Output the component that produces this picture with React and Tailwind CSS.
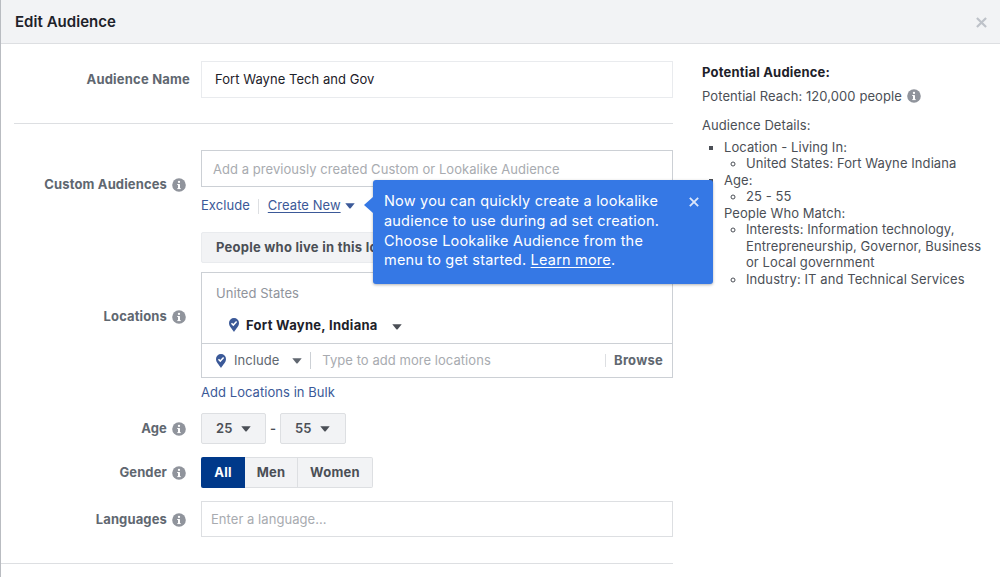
const Info = ({ className = "" }) => (
  <svg viewBox="0 0 14 14" className={`w-[14px] h-[14px] shrink-0 ${className}`}>
    <circle cx="7" cy="7" r="6.8" fill="#90949c" />
    <rect x="6" y="6" width="2" height="5" rx="0.4" fill="#fff" />
    <rect x="5.2" y="6" width="2" height="1" fill="#fff" />
    <rect x="5.2" y="10.2" width="3.6" height="0.9" fill="#fff" />
    <circle cx="7" cy="3.9" r="1.15" fill="#fff" />
  </svg>
);

const Caret = ({ color = "#4b4f56", className = "" }) => (
  <svg viewBox="0 0 10 6" className={`w-[10px] h-[6px] shrink-0 ${className}`}>
    <path d="M0.3 0.3 H9.7 L5.7 5.2 Q5 5.9 4.3 5.2 Z" fill={color} />
  </svg>
);

const Pin = ({ className = "" }) => (
  <svg viewBox="0 0 10 14" className={`w-[10px] h-[14px] shrink-0 ${className}`}>
    <path d="M5 0 A5 5 0 0 1 10 5 C10 8.6 7 10.6 5 14 C3 10.6 0 8.6 0 5 A5 5 0 0 1 5 0 Z" fill="#3b5998" />
    <path d="M2.5 5.3 L4.3 7.1 L7.6 3.5" stroke="#fff" strokeWidth="1.5" fill="none" />
  </svg>
);

const Row = ({ label, info, children, labelClass = "" }) => (
  <div className="flex">
    <div className={`w-[184px] shrink-0 flex items-center justify-end gap-[5px] font-bold text-[13px] tracking-[0.13px] text-[#606770] ${labelClass}`}>
      <span>{label}</span>
      {info && <Info />}
    </div>
    <div className="ml-[15px] w-[472px]">{children}</div>
  </div>
);

export default function App() {
  return (
    <div className="relative w-[1000px] h-[577px] overflow-hidden bg-white border-l border-[#b9bcc1] pl-px text-[13px] text-[#4b4f56] tracking-[0.05px] font-['Inter','Liberation_Sans',sans-serif]">
      <header className="-ml-px h-[44px] bg-[#f2f3f5] border-b border-[#dddfe2] flex items-center justify-between pl-[14px] pr-[13px] pt-[1px]">
        <h1 className="text-[15px] font-semibold text-[#1d2129] tracking-[0.04px]">Edit Audience</h1>
        <svg viewBox="0 0 12 12" className="w-[11px] h-[11px]">
          <path d="M1 1 L11 11 M11 1 L1 11" stroke="#bec2c9" strokeWidth="2.4" />
        </svg>
      </header>

      <div className="flex">
        <main className="w-[671px] shrink-0">
          <div className="pt-[17px] pb-[25px] ml-[12px] border-b border-[#dddfe2]">
            <div className="flex -ml-[12px]">
              <div className="w-[188px] shrink-0 flex items-center justify-end font-bold text-[13px] tracking-[0.2px] text-[#606770]">Audience Name</div>
              <div className="ml-[11px] w-[472px] h-[37px] border border-[#e9ebee] flex items-center pl-[13px] text-[#1d2129]">
                Fort Wayne Tech and Gov
              </div>
            </div>
          </div>

          <div className="pt-[26px] ml-[199px] w-[472px]">
            <div className="h-[37px] border border-[#ccd0d5] flex items-center pl-[11px] pt-[2px] text-[#a8abb0]">
              Add a previously created Custom or Lookalike Audience
            </div>
            <div className="relative">
              <div className="absolute right-[calc(100%+15px)] -top-[12px] flex items-center gap-[5px] font-bold tracking-[0.13px] text-[#606770] whitespace-nowrap">
                <span>Custom Audiences</span>
                <Info />
              </div>
            </div>
            <div className="h-[38px] flex items-center text-[#3b5998]">
              <span>Exclude</span>
              <span className="w-px h-[15px] bg-[#dddfe2] ml-[8px] mr-[9px]" />
              <span className="underline underline-offset-2">Create New</span>
              <Caret color="#3b5998" className="ml-[4px]" />
            </div>
            <div className="mt-[7px] h-[31px] w-[300px] bg-[#f2f3f5] border border-[#e9ebee] rounded-[2px] flex items-center pl-[14px] font-bold tracking-[0.25px] text-[#4b4f56] whitespace-nowrap">
              People who live in this location
            </div>
          </div>

          <div className="mt-[9px]">
            <Row label="Locations" info labelClass="pb-[17px]">
              <div className="border border-[#ccd0d5] h-[106px] flex flex-col">
                <div className="h-[71px] border-b border-[#ccd0d5] pl-[14px]">
                  <div className="pt-[11px] text-[#90949c]">United States</div>
                  <div className="mt-[12px] flex items-center ml-[13px] font-bold tracking-[0.3px] text-[#1d2129]">
                    <Pin className="mr-[7px]" />
                    <span>Fort Wayne, Indiana</span>
                    <Caret className="ml-[14px] mt-[3px]" />
                  </div>
                </div>
                <div className="flex-1 flex items-center pl-[14px] pr-[9px]">
                  <Pin className="mr-[8px]" />
                  <span className="text-[#606770]">Include</span>
                  <Caret color="#606770" className="ml-[13px]" />
                  <span className="w-px h-[17px] bg-[#ccd0d5] ml-[8px] mr-[11px]" />
                  <span className="text-[#a8abb0] flex-1">Type to add more locations</span>
                  <span className="w-px h-[13px] bg-[#dddfe2] mr-[8px]" />
                  <span className="font-bold tracking-[0.25px] text-[#606770]">Browse</span>
                </div>
              </div>
            </Row>
          </div>

          <div className="ml-[199px] mt-[6px] text-[#3b5998] leading-[16px]">Add Locations in Bulk</div>

          <div className="mt-[13px]">
            <Row label="Age" info>
              <div className="flex items-center h-[31px]">
                <div className="w-[65px] h-full bg-[#f2f3f5] border border-[#dddfe2] rounded-[2px] flex items-center pl-[14px] font-semibold">
                  25 <Caret className="ml-[9px]" />
                </div>
                <span className="w-[14px] text-center font-semibold">-</span>
                <div className="w-[66px] h-full bg-[#f2f3f5] border border-[#dddfe2] rounded-[2px] flex items-center pl-[14px] font-semibold">
                  55 <Caret className="ml-[9px]" />
                </div>
              </div>
            </Row>
          </div>

          <div className="mt-[13px]">
            <Row label="Gender" info>
              <div className="flex h-[31px] w-[172px] font-bold tracking-[0.25px]">
                <div className="w-[44px] bg-[#00398a] text-white rounded-l-[2px] flex items-center justify-center">All</div>
                <div className="w-[53px] bg-[#f2f3f5] border-y border-r border-[#dddfe2] flex items-center justify-center">Men</div>
                <div className="w-[75px] bg-[#f2f3f5] border-y border-r border-[#dddfe2] rounded-r-[2px] flex items-center justify-center">Women</div>
              </div>
            </Row>
          </div>

          <div className="mt-[13px]">
            <Row label="Languages" info labelClass="pt-[1px]">
              <div className="h-[36px] border border-[#dddfe2] flex items-center pl-[9px] pt-[2px] text-[#a8abb0]">Enter a language...</div>
            </Row>
          </div>

          <div className="-ml-[2px] mt-[26px] border-b border-[#dddfe2]" />
        </main>

        <aside className="ml-[29px] flex-1 pr-[8px] pt-[20px] text-[13px] leading-[16.5px] text-[#4b4f56] tracking-[0.08px]">
          <div className="font-bold tracking-[0.2px] text-[#1d2129]">Potential Audience:</div>
          <div className="mt-[7px] flex items-center gap-[5px]">
            <span>Potential Reach: 120,000 people</span>
            <Info />
          </div>
          <div className="mt-[13px]">Audience Details:</div>
          <ul className="mt-[5px] list-[square] pl-[22px]">
            <li>
              Location - Living In:
              <ul className="list-[circle] pl-[22px]">
                <li>United States: Fort Wayne Indiana</li>
              </ul>
            </li>
            <li>
              Age:
              <ul className="list-[circle] pl-[22px]">
                <li>25 - 55</li>
              </ul>
            </li>
            <li className="list-none">
              People Who Match:
              <ul className="list-[circle] pl-[22px]">
                <li>Interests: Information technology, Entrepreneurship, Governor, Business or Local government</li>
                <li>Industry: IT and Technical Services</li>
              </ul>
            </li>
          </ul>
        </aside>
      </div>

      <div className="absolute left-[372px] top-[180px] w-[340px] h-[104px] bg-[#3578e5] rounded-[3px] shadow-[0_1px_3px_rgba(0,0,0,0.3)] pl-[11px] pt-[11px] text-white text-[14.5px] leading-[19.8px] tracking-[0.2px]">
        <div className="absolute -left-[9px] top-[17px] w-0 h-0 border-y-[8px] border-y-transparent border-r-[9px] border-r-[#3578e5]" />
        <svg viewBox="0 0 12 12" className="absolute right-[14px] top-[17px] w-[10px] h-[10px]">
          <path d="M1 1 L11 11 M11 1 L1 11" stroke="#dbe6fa" strokeWidth="2.2" />
        </svg>
        Now you can quickly create a lookalike
        <br />
        audience to use during ad set creation.
        <br />
        Choose Lookalike Audience from the
        <br />
        menu to get started. <span className="underline underline-offset-2">Learn more</span>.
      </div>
    </div>
  );
}
